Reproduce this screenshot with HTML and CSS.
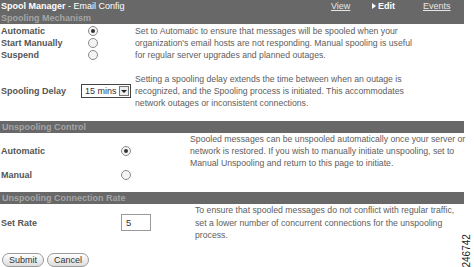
FILE: index.html
```html
<!DOCTYPE html>
<html>
<head>
<meta charset="utf-8">
<link rel="stylesheet" href="styles.css">
</head>
<body>
<div class="page">
  <div class="topbar">
    <div class="title-row">
      <div class="title"><b>Spool Manager</b> - Email Config</div>
      <nav class="nav">
        <a class="nav-link">View</a>
        <span class="nav-cur"><span class="tri"></span>Edit</span>
        <a class="nav-link">Events</a>
      </nav>
    </div>
    <div class="sec-title">Spooling Mechanism</div>
  </div>

  <div class="grid g1">
    <div class="lbl">Automatic</div><div class="ctl"><span class="radio on"></span></div>
    <div class="desc span3">Set to Automatic to ensure that messages will be spooled when your<br>organization's email hosts are not responding. Manual spooling is useful<br>for regular server upgrades and planned outages.</div>
    <div class="lbl">Start Manually</div><div class="ctl"><span class="radio"></span></div>
    <div class="lbl">Suspend</div><div class="ctl"><span class="radio"></span></div>
  </div>

  <div class="grid g1 delay">
    <div class="lbl mid">Spooling Delay</div>
    <div class="ctl mid"><span class="select">15 mins<span class="sel-btn"><span class="dn"></span></span></span></div>
    <div class="desc">Setting a spooling delay extends the time between when an outage is<br>recognized, and the Spooling process is initiated. This accommodates<br>network outages or inconsistent connections.</div>
  </div>

  <div class="sec-bar s2">Unspooling Control</div>
  <div class="grid g2">
    <div class="lbl mid">Automatic</div><div class="ctl mid"><span class="radio on"></span></div>
    <div class="desc">Spooled messages can be unspooled automatically once your server or<br>network is restored. If you wish to manually initiate unspooling, set to<br>Manual Unspooling and return to this page to initiate.</div>
    <div class="lbl">Manual</div><div class="ctl"><span class="radio"></span></div><div></div>
  </div>

  <div class="sec-bar s3">Unspooling Connection Rate</div>
  <div class="grid g3">
    <div class="lbl mid">Set Rate</div>
    <div class="ctl mid"><span class="textbox">5</span></div>
    <div class="desc">To ensure that spooled messages do not conflict with regular traffic,<br>set a lower number of concurrent connections for the unspooling<br>process.</div>
  </div>

  <div class="buttons">
    <button class="btn">Submit</button>
    <button class="btn">Cancel</button>
  </div>
</div>
<div class="fig-id">246742</div>
</body>
</html>
```

FILE: styles.css
```css
html, body {
  margin: 0;
  padding: 0;
  background: #fff;
}
body {
  font-family: "Liberation Sans", Arial, sans-serif;
  font-size: 9px;
  color: #555;
  width: 474px;
  height: 267px;
  position: relative;
  overflow: hidden;
}
.page {
  width: 464px;
}
.topbar {
  background: #686868;
  height: 24px;
  padding-left: 1px;
}
.title-row {
  display: flex;
  height: 12px;
  align-items: center;
}
.title {
  color: #fff;
  font-size: 9px;
}
.nav {
  margin-left: auto;
  display: grid;
  grid-template-columns: 41px 51px 40px;
  width: 133px;
}
.nav-link {
  color: #e6e6e6;
  text-decoration: underline;
}
.nav-cur {
  color: #fff;
  font-weight: bold;
  display: flex;
  align-items: center;
  gap: 2px;
}
.tri {
  width: 0;
  height: 0;
  border-left: 4px solid #fff;
  border-top: 3px solid transparent;
  border-bottom: 3px solid transparent;
}
.sec-title {
  height: 12px;
  line-height: 12px;
  color: #a5a5a5;
  font-weight: bold;
}
.sec-bar {
  background: #686868;
  color: #a5a5a5;
  font-weight: bold;
  height: 12px;
  line-height: 12px;
  padding-left: 2px;
}
.grid {
  display: grid;
  line-height: 12px;
}
.g1 {
  grid-template-columns: 81px 54px 1fr;
  margin-top: 1px;
}
.delay {
  margin-top: 12px;
}
.g2 {
  grid-template-columns: 121px 69px 1fr;
}
.g3 {
  grid-template-columns: 121px 74px 1fr;
  line-height: 12.5px;
}
.s2 { margin-top: 12px; }
.s3 { margin-top: 11px; }
.lbl {
  font-weight: bold;
  padding-left: 1px;
  white-space: nowrap;
}
.mid {
  align-self: center;
}
.span3 {
  grid-row: span 3;
}
.ctl {
  display: flex;
  align-items: center;
}
.g1 .ctl .radio { margin-left: 7px; }
.desc {
  white-space: nowrap;
  font-size: 8.7px;
  color: #5e5e5e;
}
.radio {
  display: inline-block;
  width: 8px;
  height: 8px;
  border: 1px solid #8a8a8a;
  border-radius: 50%;
  background: #f4f4f4;
  position: relative;
}
.radio.on::after {
  content: "";
  position: absolute;
  left: 2px;
  top: 2px;
  width: 4px;
  height: 4px;
  border-radius: 50%;
  background: #333;
}
.select {
  display: inline-flex;
  align-items: center;
  width: 45px;
  height: 12px;
  border: 1px solid #444;
  padding-left: 3px;
  box-sizing: content-box;
  font-size: 9px;
  color: #333;
  background: #fff;
  justify-content: space-between;
}
.sel-btn {
  width: 8px;
  height: 8px;
  border: 1px solid #777;
  margin-right: 1px;
  background: #eee;
  display: flex;
  align-items: center;
  justify-content: center;
}
.dn {
  width: 0;
  height: 0;
  border-top: 3px solid #222;
  border-left: 3px solid transparent;
  border-right: 3px solid transparent;
}
.textbox {
  display: inline-block;
  width: 24px;
  height: 15px;
  line-height: 15px;
  border: 1px solid #999;
  padding-left: 4px;
  color: #333;
  font-size: 9.5px;
}
.buttons {
  margin-top: 11px;
  display: flex;
  gap: 3px;
  padding-left: 2px;
}
.btn {
  font-family: "Liberation Sans", Arial, sans-serif;
  font-size: 9px;
  color: #333;
  height: 14px;
  padding: 0 6px;
  border: 1px solid #999;
  border-radius: 7px;
  background: linear-gradient(#fff, #ddd);
  line-height: 12px;
}
.fig-id {
  position: absolute;
  left: 459px;
  top: 247px;
  transform: rotate(-90deg);
  transform-origin: center;
  font-size: 10px;
  color: #222;
  width: 30px;
  text-align: center;
  margin-left: -8px;
}
```
